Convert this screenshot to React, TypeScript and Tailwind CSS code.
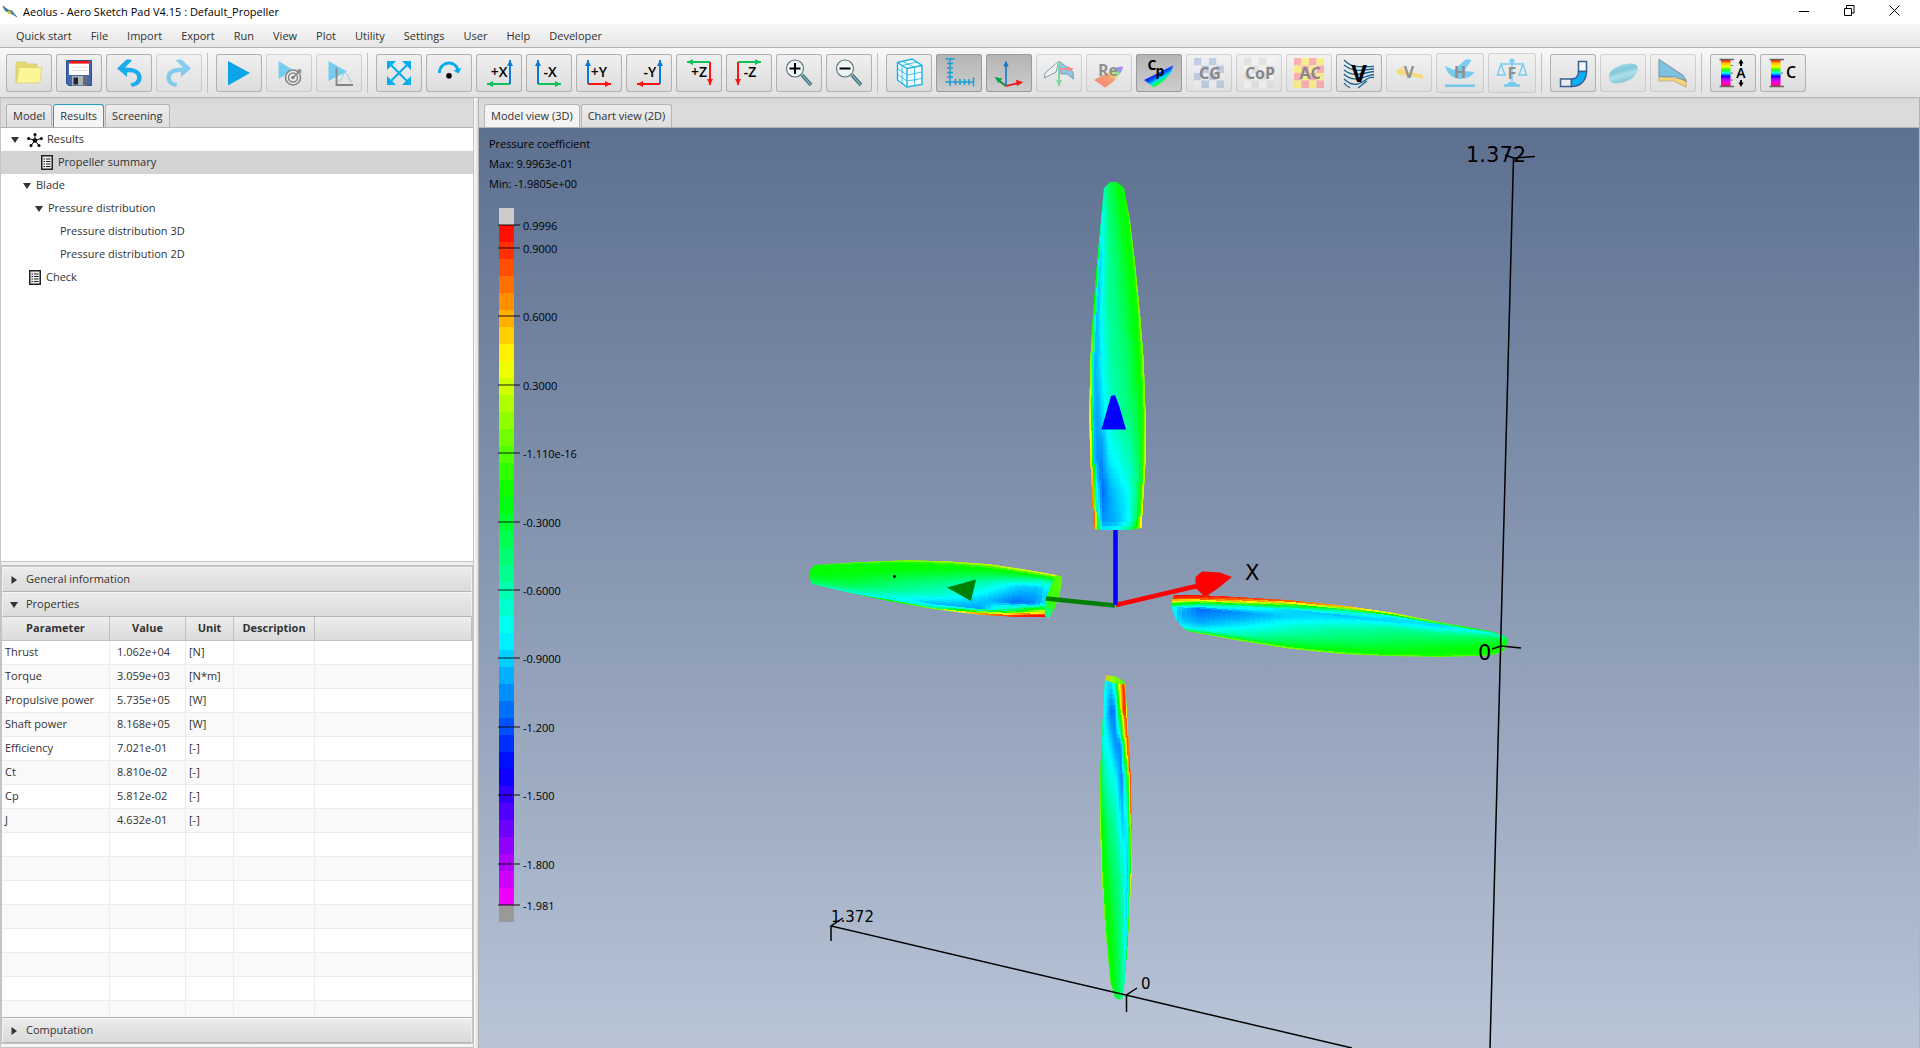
import type { ReactNode } from "react";
import clsx from "clsx";

const menus = [
  "Quick start",
  "File",
  "Import",
  "Export",
  "Run",
  "View",
  "Plot",
  "Utility",
  "Settings",
  "User",
  "Help",
  "Developer",
];

const BLUE = "#00adef";

/* ---------- toolbar icons (46 x 38 boxes) ---------- */

function Glyph({
  x,
  y,
  size = 14,
  weight = 600,
  fill = "#000",
  children,
}: {
  x: number;
  y: number;
  size?: number;
  weight?: number;
  fill?: string;
  children: string;
}) {
  return (
    <text
      x={x}
      y={y}
      fontSize={size}
      fontWeight={weight}
      fill={fill}
      textAnchor="middle"
    >
      {children}
    </text>
  );
}

type Dir = "up" | "down" | "left" | "right";

const heads: Record<Dir, string> = {
  up: "M-3 6 L0 0 L3 6Z",
  down: "M-3 -6 L0 0 L3 -6Z",
  left: "M6 -3 L0 0 L6 3Z",
  right: "M-6 -3 L0 0 L-6 3Z",
};

function Arrow({
  from,
  to,
  dir,
  color,
}: {
  from: [number, number];
  to: [number, number];
  dir: Dir;
  color: string;
}) {
  return (
    <g stroke={color} fill={color}>
      <line x1={from[0]} y1={from[1]} x2={to[0]} y2={to[1]} strokeWidth="2" />
      <path
        d={heads[dir]}
        stroke="none"
        transform={`translate(${to[0]} ${to[1]})`}
      />
    </g>
  );
}

function AxisView({ label, side }: { label: string; side: "left" | "right" }) {
  const corner = side === "left" ? 12 : 34;
  const far = side === "left" ? 35 : 11;
  const out: Dir = side === "left" ? "right" : "left";
  const axis = label[1];
  const top = axis === "Z";
  const y = top ? 8 : 30;
  return (
    <>
      <Arrow
        from={[corner, y]}
        to={[far, y]}
        dir={out}
        color={axis === "Y" ? "#ff1414" : "#0fc35a"}
      />
      <Arrow
        from={[corner, y]}
        to={[corner, top ? 31 : 6]}
        dir={top ? "down" : "up"}
        color={top ? "#ff1414" : "#0f78d2"}
      />
      <Glyph x={label[0] === "+" ? 23 : 24} y={23}>
        {label}
      </Glyph>
    </>
  );
}

function Magnifier({ plus }: { plus?: boolean }) {
  return (
    <>
      <line x1="26" y1="21" x2="35" y2="31" stroke="#3c6e78" strokeWidth="3.6" />
      <line x1="26" y1="21" x2="35" y2="31" stroke="#7fb0b8" strokeWidth="1.4" />
      <circle cx="19" cy="14.5" r="8.5" fill="#eef5f6" stroke="#5d7478" strokeWidth="1.1" />
      <path
        d={plus ? "M13.5 14.5H24.5M19 9V20" : "M13.5 14.5H24.5"}
        stroke="#000"
        strokeWidth="2"
      />
    </>
  );
}

function Checker({ a, b, label }: { a: string; b: string; label: string }) {
  const cells = [];
  for (let r = 0; r < 4; r++)
    for (let c = 0; c < 4; c++)
      cells.push(
        <rect
          key={`${r}-${c}`}
          x={8 + c * 7.5}
          y={4 + r * 7.5}
          width="7.5"
          height="7.5"
          fill={(r + c) % 2 ? b : a}
        />
      );
  return (
    <>
      {cells}
      <Glyph x={24} y={25} size={16} weight={700} fill="#222">
        {label}
      </Glyph>
    </>
  );
}

function ColorBar({ id }: { id: string }) {
  const stops = [0, 45, 60, 110, 180, 240, 285, 310, 340];
  return (
    <>
      <defs>
        <linearGradient id={id} x1="0" y1="0" x2="0" y2="1">
          {stops.map((h, i) => (
            <stop key={h} offset={i / (stops.length - 1)} stopColor={`hsl(${h} 100% 50%)`} />
          ))}
        </linearGradient>
      </defs>
      <rect x="11" y="6" width="9.5" height="26" fill={`url(#${id})`} />
      <path d="M9.5 5.5H24M9.5 32.5H24" stroke="#666" strokeWidth="1.6" />
    </>
  );
}

const undoArrow =
  "M24 5.5H20.5L11 14.5 21 23V18.5C29 17.5 32 21 31 25 30 28 27 29 24.5 29.5L26 33C33 31.5 36 28 35.5 22.5 35 16.5 29 13.5 19 13.5L26 6.5Z";

const icons: Record<string, ReactNode> = {
  open: (
    <>
      <path d="M10 29V9l1-1h9l2 2h9v6H13Z" fill="#e4d873" stroke="#d5c96a" strokeWidth=".7" />
      <path d="M13 13.5h23L34 28l-1 1H10.5Z" fill="#faf698" stroke="#dccf74" strokeWidth=".8" />
    </>
  ),
  save: (
    <>
      <path d="M10.5 6.5h25v25H12.5l-2-2Z" fill="#4267b0" stroke="#2f4f8e" />
      <rect x="13" y="7" width="20" height="14" fill="#fff" />
      <rect x="13" y="7" width="20" height="2.6" fill="#ee1111" />
      <path d="M15 13h16M15 16.5h16" stroke="#ddd" />
      <rect x="16" y="22" width="15" height="9.5" fill="#aeb2b8" />
      <rect x="17.5" y="23.5" width="4.5" height="7" fill="#1d2433" />
      <rect x="27" y="22" width="4" height="9.5" fill="#666c76" />
    </>
  ),
  undo: <path d={undoArrow} fill="#1cacee" />,
  redo: <path d={undoArrow} transform="matrix(-1 0 0 1 46 0)" fill="#1cacee" />,
  run: <path d="M12 7 34 19 12 31.5Z" fill="#0aa5e6" />,
  target: (
    <>
      <path d="M12.5 7 27 16 12.5 25Z" fill={BLUE} />
      <g fill="none" stroke="#222">
        <circle cx="27" cy="23.5" r="7.5" strokeWidth="1.6" fill="#eee" />
        <circle cx="27" cy="23.5" r="4.5" strokeWidth="1.5" />
        <path d="M27 23.5 35 15.5M32.5 15v3h3" strokeWidth="1.5" />
      </g>
      <circle cx="27" cy="23.5" r="1.8" fill="#222" />
    </>
  ),
  sweep: (
    <>
      <path d="M12.5 7 31 17.5 12.5 27Z" fill={BLUE} />
      <path d="M20.5 14V31H37" fill="none" stroke="#222" strokeWidth="1.8" />
      <path d="M23 27C27 26 27 16 30 19S33 28 36 28" fill="none" stroke="#2aa8e0" />
    </>
  ),
  fit: (
    <g fill={BLUE} stroke={BLUE}>
      <path d="M14 10 32 28M32 10 14 28" strokeWidth="2" />
      <path
        stroke="none"
        d="M11 7h9l-3.500 3.500 -2 2L11 16ZM35 7h-9l3.500 3.500 2 2L35 16ZM11 31h9l-3.500-3.500 -2-2L11 22ZM35 31h-9l3.500-3.500 2-2L35 22Z"
      />
    </g>
  ),
  rotate: (
    <>
      <path d="M13.5 19C13.5 6 31 6 32 17" fill="none" stroke={BLUE} strokeWidth="2.8" />
      <path d="M27.5 16.5 35.5 14 32.5 19.5Z" fill={BLUE} />
      <circle cx="23" cy="21.7" r="2.8" />
    </>
  ),
  px: <AxisView label="+X" side="right" />,
  mx: <AxisView label="-X" side="left" />,
  py: <AxisView label="+Y" side="left" />,
  my: <AxisView label="-Y" side="right" />,
  pz: <AxisView label="+Z" side="right" />,
  mz: <AxisView label="-Z" side="left" />,
  zoomIn: <Magnifier plus />,
  zoomOut: <Magnifier />,
  mesh: (
    <g fill="none" stroke="#1fb2e4">
      <path d="M11.5 8.5 26 5 36 11.5V30.5L21 33 11.5 26Z" fill="#f2fbff" strokeWidth="1.4" />
      <path d="M11.5 8.5 21 14.5 36 11.5M21 14.5V33" strokeWidth="1.4" />
      <path
        d="M16 11.5V29.5M28.5 13V32M11.5 14.5 21 21 36 18M11.5 20.5 21 27 36 24.5M16.500 7.5 28.5 13M16 11.5 31 8"
        strokeWidth=".8"
      />
    </g>
  ),
  ruler: (
    <g stroke="#1b9fd3" strokeWidth="1.5">
      <path d="M14 4.5V32M9.5 28H37.5" />
      <path d="M9.5 5H18.5M11 9.5H17M11 14H17M11 18.5H17M11 23H17M37.5 23.5V32.5M33 25V31M28.5 25V31M24 25V31M19.5 25V31" />
    </g>
  ),
  axes: (
    <>
      <path d="M20 32V10" stroke="#0f78d2" strokeWidth="1.6" />
      <path d="M20 6.5 22.7 12.5H17.3Z" fill="#0f78d2" />
      <path d="M20 32 12 26" stroke="#088a40" strokeWidth="1.8" />
      <path d="M8.5 23 16.5 24.5 12.5 29Z" fill="#08a048" />
      <path d="M20 32 32 29" stroke="#e11" strokeWidth="1.8" />
      <path d="M37 28.3 30 25.8 31 32Z" fill="#f11" />
    </>
  ),
  plane: (
    <>
      <path d="M23 7 37 18 37.5 25 31 20H25Z" fill="#2aa8e0" stroke="#234b7a" />
      <path d="M23 7 9 19 8.5 24 20 18Z" fill="#f4f6fa" stroke="#234b7a" />
      <Arrow from={[23, 7]} to={[23, 32]} dir="down" color="#0fc35a" />
      <Arrow from={[23, 15]} to={[37, 15]} dir="right" color="#f33" />
    </>
  ),
  re: (
    <>
      <defs>
        <linearGradient id="swoosh-re" x1="0" y1="1" x2="1" y2="0">
          <stop offset="0" stopColor="#ff1b00" />
          <stop offset=".5" stopColor="#ff5500" />
          <stop offset=".65" stopColor="#ffd000" />
          <stop offset=".75" stopColor="#22dd44" />
          <stop offset=".85" stopColor="#2244ff" />
          <stop offset="1" stopColor="#c0f" />
        </linearGradient>
      </defs>
      <path d="M8 26 32 13 37 12.5C36 20 28 28 19 33.5Z" fill="url(#swoosh-re)" />
      <Glyph x={22} y={22} size={16} weight={700} fill="#333">
        Re
      </Glyph>
    </>
  ),
  cp: (
    <>
      <defs>
        <linearGradient id="swoosh-cp" x1=".2" y1=".2" x2=".7" y2=".85">
          <stop offset=".2" stopColor="#1500ff" />
          <stop offset=".5" stopColor="#0060ff" />
          <stop offset=".65" stopColor="#00e0ff" />
          <stop offset=".8" stopColor="#00ff50" />
          <stop offset="1" stopColor="#c8ff00" />
        </linearGradient>
      </defs>
      <path d="M8 26 32 14 37 11.5C36 20 27 29 18 33.5Z" fill="url(#swoosh-cp)" />
      <Glyph x={16} y={16} weight={700}>
        C
      </Glyph>
      <Glyph x={24} y={22} weight={700}>
        p
      </Glyph>
    </>
  ),
  cg: <Checker a="#8fabd4" b="#e6e9f0" label="CG" />,
  cop: <Checker a="#d4d4d2" b="#f2f2ee" label="CoP" />,
  ac: <Checker a="#ff7078" b="#ffee28" label="AC" />,
  stream: (
    <>
      <g fill="none" stroke="#1a6396" strokeWidth="1.3">
        <path d="M8 6C16 14 22 13 38 12.5M8 11C18 19 24 16 38 15M8 16C18 24 26 19 38 17.5M8 20C18 30 28 22 38 20.5M8 25C18 34 24 30 31 25 34 23 36 23.5 38 23.5M8 29C10 32 12 33 14 33.500M22 34C27 30 28 29 31 27" />
      </g>
      <Glyph x={23} y={28} size={24} weight={700}>
        V
      </Glyph>
    </>
  ),
  velocity: (
    <>
      <path d="M9.5 17.5 17 13V16.5L37 21V24.5L16 20.5V23Z" fill="#ffc90e" />
      <Glyph x={23} y={24} size={16} weight={700} fill="#333">
        V
      </Glyph>
    </>
  ),
  hinge: (
    <>
      <g fill={BLUE}>
        <path d="M9 13C13 14 15 16 18 17L29 7C32 6 35 6 35 8L28 18 38.5 19C34 26 28 25 24 26 16 25 12 22 9 13Z" />
        <rect x="9" y="31.5" width="30" height="2.5" />
      </g>
      <Glyph x={24} y={25} size={16} weight={700} fill="#333">
        H
      </Glyph>
    </>
  ),
  balance: (
    <>
      <g stroke={BLUE} fill="none" strokeWidth="1.5">
        <path d="M24 6V32M13 11H35M13 11 9.5 22H17ZM35 11 31 22H38.5Z" />
        <path d="M16 32.5H32M20 30.5H28" strokeWidth="2.5" />
      </g>
      <circle cx="24" cy="8" r="2.5" fill={BLUE} />
      <Glyph x={24} y={26} size={16} weight={700} fill="#333">
        F
      </Glyph>
    </>
  ),
  duct: (
    <g stroke="#3b5f93" strokeWidth="1.5">
      <path d="M28.5 7.5H36.5V17.5H28.5Z" fill="#f4f6fa" />
      <path d="M10.5 25H21.5V32.5H10.5Z" fill="#e8ecf4" />
      <path d="M28.5 17.5H36.5C36.5 26 31 32.5 21.5 32.5V25C26 25 28.5 22 28.5 17.5Z" fill="#0ab0f5" />
    </g>
  ),
  body: (
    <>
      <defs>
        <linearGradient id="body-shade" x1=".3" y1="0" x2=".7" y2="1">
          <stop offset="0" stopColor="#5cc8e0" />
          <stop offset=".35" stopColor="#1aa3cc" />
          <stop offset=".55" stopColor="#6fd6ea" />
          <stop offset="1" stopColor="#1590b4" />
        </linearGradient>
      </defs>
      <path
        d="M9 23C8 16 20 10 30 9.5 36 9 39 12 37.5 17 35 24 26 29 16 29.5 11 29.5 9 27 9 23Z"
        fill="url(#body-shade)"
      />
    </>
  ),
  wing: (
    <g strokeWidth="1.2">
      <path d="M9 23V27H24L36 33V25Z" fill="#ffc400" stroke="#a8863a" />
      <path d="M9 5.5 33 21.5 36 27 25 22.5H9Z" fill="#1198d5" stroke="#234b7a" />
    </g>
  ),
  autoScale: (
    <>
      <ColorBar id="bar-auto" />
      <path d="M20.5 11.5H23M20.5 19H23M20.5 26H23" stroke="#666" />
      <Glyph x={31} y={24}>
        A
      </Glyph>
      <path d="M31 5 33.5 9.5H32V12H30V9.5H28.5ZM31 33 33.5 28.5H32V26H30V28.5H28.5Z" />
    </>
  ),
  customScale: (
    <>
      <ColorBar id="bar-custom" />
      <path d="M20.5 19H23" stroke="#666" />
      <Glyph x={31} y={24} size={16}>
        C
      </Glyph>
    </>
  ),
};

type Tool = { id: string; title: string; disabled?: boolean; pressed?: boolean; large?: boolean };

const toolGroups: Tool[][] = [
  [
    { id: "open", title: "Open" },
    { id: "save", title: "Save" },
    { id: "undo", title: "Undo" },
    { id: "redo", title: "Redo", disabled: true },
  ],
  [
    { id: "run", title: "Run" },
    { id: "target", title: "Run target", disabled: true },
    { id: "sweep", title: "Run sweep", disabled: true },
  ],
  [
    { id: "fit", title: "Fit view" },
    { id: "rotate", title: "Rotate" },
    { id: "px", title: "View +X" },
    { id: "mx", title: "View -X" },
    { id: "py", title: "View +Y" },
    { id: "my", title: "View -Y" },
    { id: "pz", title: "View +Z" },
    { id: "mz", title: "View -Z" },
    { id: "zoomIn", title: "Zoom in" },
    { id: "zoomOut", title: "Zoom out" },
  ],
  [
    { id: "mesh", title: "Mesh" },
    { id: "ruler", title: "Ruler", pressed: true },
    { id: "axes", title: "Axes", pressed: true },
    { id: "plane", title: "Forces", disabled: true },
    { id: "re", title: "Reynolds number", disabled: true },
    { id: "cp", title: "Pressure coefficient", pressed: true },
    { id: "cg", title: "Center of gravity", disabled: true },
    { id: "cop", title: "Center of pressure", disabled: true },
    { id: "ac", title: "Aerodynamic center", disabled: true },
    { id: "stream", title: "Streamlines" },
    { id: "velocity", title: "Velocity", disabled: true },
    { id: "hinge", title: "Hinge", disabled: true, large: true },
    { id: "balance", title: "Balance", disabled: true, large: true },
  ],
  [
    { id: "duct", title: "Duct" },
    { id: "body", title: "Body", disabled: true },
    { id: "wing", title: "Wing", disabled: true },
  ],
  [
    { id: "autoScale", title: "Automatic scale" },
    { id: "customScale", title: "Custom scale" },
  ],
];

function ToolButton({ tool }: { tool: Tool }) {
  return (
    <button
      type="button"
      aria-label={tool.title}
      aria-pressed={tool.pressed}
      disabled={tool.disabled}
      className={clsx(
        "shrink-0 rounded-[3px] ring-1 ring-inset",
        tool.large ? "h-10 w-12" : "h-[38px] w-[46px]",
        tool.pressed
          ? "bg-linear-to-b from-[#b4b4b4] to-[#cdcdcd] ring-[#9c9c9c]"
          : "bg-linear-to-b from-[#f0f0f0] to-[#dcdcdc] ring-[#b0b0b0]",
        tool.disabled && "opacity-50"
      )}
    >
      <svg
        viewBox={tool.large ? "0 0 48 40" : "0 0 46 38"}
        className="block h-full w-full"
        aria-hidden="true"
      >
        {icons[tool.id]}
      </svg>
    </button>
  );
}

function Toolbar() {
  return (
    <div className="flex h-[50px] shrink-0 items-center border-b border-[#b4b4b4] bg-linear-to-b from-[#f8f8f8] to-[#e2e2e2] px-1.5">
      {toolGroups.map((group, i) => (
        <div key={i} className="flex items-center">
          {i > 0 && <span className="ml-[5px] mr-2 h-10 w-px bg-[#c0c0c0]" />}
          <div className="flex items-center gap-1">
            {group.map((tool) => (
              <ToolButton key={tool.id} tool={tool} />
            ))}
          </div>
        </div>
      ))}
    </div>
  );
}

/* ---------- window chrome ---------- */

function TitleBar() {
  return (
    <div className="flex h-6 shrink-0 items-center bg-white pl-0.5">
      <svg viewBox="0 0 16 14" className="h-3.5 w-4" aria-hidden="true">
        <path d="M0 1 7 5 9 9 3 6Z" fill="#3f8790" />
        <path d="M6 5 10 5 15 12 9 9Z" fill="#5a93ad" />
        <circle cx="7.5" cy="7.5" r="2" fill="#d9c84a" />
        <path d="M1 1 15 12" stroke="#2f6b85" strokeWidth=".8" />
      </svg>
      <span className="ml-[5px] text-[11px] leading-4 text-black">
        Aeolus - Aero Sketch Pad V4.15 : Default_Propeller
      </span>
      <div className="ml-auto flex pb-1 pr-5">
        <button type="button" aria-label="Minimize" className="mr-[34px]">
          <svg viewBox="0 0 11 11" className="h-[11px] w-[11px]">
            <path d="M0 6.5H10" stroke="#000" />
          </svg>
        </button>
        <button type="button" aria-label="Restore" className="mr-[34px]">
          <svg viewBox="0 0 11 11" className="h-[11px] w-[11px]">
            <path d="M.5 3.5H7.5V10.5H.5ZM2.5 3V.5H10V8H8" fill="none" stroke="#000" />
          </svg>
        </button>
        <button type="button" aria-label="Close">
          <svg viewBox="0 0 11 11" className="h-[11px] w-[11px]">
            <path d="M.5 .5 10.5 10.5M10.5 .5 .5 10.5" stroke="#000" />
          </svg>
        </button>
      </div>
    </div>
  );
}

function MenuBar() {
  return (
    <nav className="flex h-6 shrink-0 items-center gap-[19px] border-b border-[#b4b4b4] bg-linear-to-b from-[#f8f8f8] to-[#e6e6e6] px-4">
      {menus.map((menu) => (
        <button key={menu} type="button" className="leading-4">
          {menu}
        </button>
      ))}
    </nav>
  );
}

function TabBar({
  tabs,
  active,
  focused,
}: {
  tabs: string[];
  active: string;
  focused?: boolean;
}) {
  return (
    <div
      role="tablist"
      className="flex h-[30px] shrink-0 items-end gap-px border-b border-[#b4b4b4] bg-linear-to-b from-[#d4d4d4] via-[#dcdcdc] via-20% to-[#dcdcdc] pl-[5px]"
    >
      {tabs.map((tab) => (
        <button
          key={tab}
          type="button"
          role="tab"
          aria-selected={tab === active}
          className={clsx(
            "h-[23px] rounded-t-[3px] border border-b-0 px-1.5 leading-[22px]",
            tab !== active &&
              "border-[#b4b4b4] bg-linear-to-b from-[#ededed] to-[#dedede]",
            tab === active && "bg-[#f4f4f4]",
            tab === active && (focused ? "border-[#2b9dc4]" : "border-[#b4b4b4]")
          )}
        >
          {tab}
        </button>
      ))}
    </div>
  );
}

/* ---------- left side ---------- */

function Triangle({ open }: { open?: boolean }) {
  return (
    <svg viewBox="0 0 8 8" className="h-2 w-2 shrink-0" aria-hidden="true">
      <path d={open ? "M0 1H8L4 7Z" : "M1.5 0V8L7 4Z"} fill="#333" />
    </svg>
  );
}

function ListIcon() {
  return (
    <svg viewBox="0 0 12 15" className="h-[15px] w-3 shrink-0" aria-hidden="true">
      <rect x=".75" y=".75" width="10.5" height="13.5" fill="#eee" stroke="#222" strokeWidth="1.5" />
      <path d="M2.5 4H4M2.5 6.5H4M2.5 9H4M2.5 11.5H4M5 4H9.5M5 6.5H9.5M5 9H9.5M5 11.5H9.5" stroke="#222" />
    </svg>
  );
}

function HubIcon() {
  return (
    <svg viewBox="0 0 16 14" className="h-3.5 w-4 shrink-0" aria-hidden="true">
      <path d="M8 7.5V2M8 7.5 2 5.5M8 7.5 14 5.5M8 7.5 4 12.5M8 7.5 12 12.5" stroke="#000" />
      <circle cx="8" cy="7.5" r="2.2" />
      <circle cx="8" cy="1.6" r="1.5" />
      <circle cx="1.6" cy="5.5" r="1.5" />
      <circle cx="14.4" cy="5.5" r="1.5" />
      <circle cx="4" cy="12.4" r="1.5" />
      <circle cx="12" cy="12.4" r="1.5" />
    </svg>
  );
}

function ResultTree() {
  const row = "flex h-[23px] items-center";
  return (
    <ul role="tree" className="min-h-0 flex-1 overflow-hidden bg-white">
      <li role="treeitem" className={clsx(row, "gap-1 pl-2.5")}>
        <Triangle open />
        <span className="ml-1">
          <HubIcon />
        </span>
        <span>Results</span>
      </li>
      <li role="treeitem" aria-selected="true" className={clsx(row, "gap-[5px] bg-[#d3d3d3] pl-10")}>
        <ListIcon />
        <span>Propeller summary</span>
      </li>
      <li role="treeitem" className={clsx(row, "gap-[5px] pl-[22px]")}>
        <Triangle open />
        <span>Blade</span>
      </li>
      <li role="treeitem" className={clsx(row, "gap-[5px] pl-[34px]")}>
        <Triangle open />
        <span>Pressure distribution</span>
      </li>
      <li role="treeitem" className={clsx(row, "pl-[59px]")}>
        Pressure distribution 3D
      </li>
      <li role="treeitem" className={clsx(row, "pl-[59px]")}>
        Pressure distribution 2D
      </li>
      <li role="treeitem" className={clsx(row, "gap-[5px] pl-7")}>
        <ListIcon />
        <span>Check</span>
      </li>
    </ul>
  );
}

function SectionHeader({ title, open }: { title: string; open?: boolean }) {
  return (
    <button
      type="button"
      aria-expanded={!!open}
      className="flex h-[25px] w-full shrink-0 items-center gap-2 border border-t-[#f6f6f6] border-x-[#f0f0f0] border-b-[#b4b4b4] bg-linear-to-b from-[#ececec] to-[#dadada] pl-[7px] text-left"
    >
      <Triangle open={open} />
      {title}
    </button>
  );
}

const properties = [
  ["Thrust", "1.062e+04", "[N]"],
  ["Torque", "3.059e+03", "[N*m]"],
  ["Propulsive power", "5.735e+05", "[W]"],
  ["Shaft power", "8.168e+05", "[W]"],
  ["Efficiency", "7.021e-01", "[-]"],
  ["Ct", "8.810e-02", "[-]"],
  ["Cp", "5.812e-02", "[-]"],
  ["J", "4.632e-01", "[-]"],
  ...Array.from({ length: 8 }, () => ["", "", ""]),
];

function PropertyTable() {
  const cell = "border-r border-b border-[#ececec] p-0";
  return (
    <div className="h-[400px] shrink-0 overflow-hidden bg-white">
      <table className="w-full table-fixed border-separate border-spacing-0">
        <colgroup>
          <col className="w-[108px]" />
          <col className="w-[76px]" />
          <col className="w-12" />
          <col className="w-[81px]" />
          <col />
        </colgroup>
        <thead>
          <tr className="h-6">
            {["Parameter", "Value", "Unit", "Description", ""].map((head, i) => (
              <th
                key={i}
                className="border-r border-b border-[#c0c0c0] bg-linear-to-b from-[#eeeeee] to-[#dadada] p-0 font-bold"
              >
                {head}
              </th>
            ))}
          </tr>
        </thead>
        <tbody>
          {properties.map(([name, value, unit], i) => (
            <tr key={i} className="h-6 even:bg-[#f9f9f9]">
              <td className={clsx(cell, "pl-[3px]")}>{name}</td>
              <td className={clsx(cell, "pl-[7px]")}>{value}</td>
              <td className={clsx(cell, "pl-[3px]")}>{unit}</td>
              <td className={cell} />
              <td className="border-b border-[#ececec] p-0" />
            </tr>
          ))}
        </tbody>
      </table>
    </div>
  );
}

function SidePanel() {
  return (
    <aside className="flex w-[474px] shrink-0 flex-col border-x border-[#c4c4c4] bg-[#f4f4f4]">
      <TabBar tabs={["Model", "Results", "Screening"]} active="Results" focused />
      <ResultTree />
      <div className="h-[5px] shrink-0 border-y border-[#c4c4c4] bg-[#efefef]" />
      <div className="shrink-0 border border-[#c4c4c4]">
        <SectionHeader title="General information" />
        <SectionHeader title="Properties" open />
        <PropertyTable />
        <div className="border-t border-[#b4b4b4]">
          <SectionHeader title="Computation" />
        </div>
      </div>
      <div className="h-1 shrink-0 border-b border-[#c4c4c4]" />
    </aside>
  );
}

/* ---------- 3D view ---------- */

// Chordwise positions at which the hues of a station are given.
const CHORD = [0, 0.04, 0.1, 0.2, 0.35, 0.5, 0.7, 0.88, 0.96, 1];

// Each station is a section of the blade: both edge points and the hues between them.
type Station = [number, number, number, number, number[]];

type Blade = { id: string; outline: string; stations: Station[] };

const blades: Blade[] = [
  {
    id: "top",
    outline:
      "M1110 182H1117L1124 188 1130 220 1135 260 1140 310 1144 360 1146 416 1146 460 1144 493 1142 528 1130 530H1100L1093 529 1091 493 1090 460 1089 416 1090 360 1093 310 1097 260 1101 218 1104 188Z",
    stations: [
      [1104, 182, 1124, 182, [160, 155, 150, 145, 135, 130, 122, 118, 115, 100]],
      [1101, 218, 1130, 218, [150, 175, 175, 155, 145, 138, 125, 120, 115, 80]],
      [1097, 260, 1135, 260, [90, 165, 190, 168, 152, 146, 130, 120, 115, 80]],
      [1093, 310, 1140, 310, [80, 160, 195, 175, 155, 150, 136, 120, 112, 70]],
      [1090, 360, 1144, 360, [40, 140, 200, 184, 160, 153, 143, 122, 110, 70]],
      [1089, 416, 1146, 416, [20, 120, 203, 196, 170, 160, 150, 130, 110, 60]],
      [1090, 460, 1146, 460, [10, 100, 203, 208, 184, 178, 162, 140, 100, 55]],
      [1092, 493, 1144, 493, [5, 70, 180, 216, 200, 190, 180, 148, 105, 50]],
      [1093, 522, 1142, 522, [5, 40, 150, 205, 202, 196, 182, 138, 90, 35]],
      [1093, 530, 1142, 530, [5, 60, 150, 182, 180, 175, 150, 120, 75, 30]],
    ],
  },
  {
    id: "left",
    outline:
      "M815 565 857 562 907 560 947 561 990 564 1023 569 1057 575 1055 590 1046 617 1013 617 980 615 933 609 893 602 850 593 812 584 809 577 810 570Z",
    stations: [
      [809, 565, 809, 584, [115, 118, 118, 118, 120, 122, 128, 140, 160, 110]],
      [857, 562, 850, 594, [90, 115, 118, 118, 122, 128, 138, 155, 180, 90]],
      [907, 560, 893, 602, [75, 112, 118, 120, 130, 142, 154, 172, 185, 60]],
      [947, 561, 933, 610, [65, 110, 118, 124, 142, 155, 170, 198, 150, 40]],
      [990, 564, 980, 615, [60, 100, 120, 134, 160, 176, 192, 202, 60, 15]],
      [1023, 569, 1013, 617, [55, 95, 122, 150, 190, 200, 215, 130, 20, 5]],
      [1042, 572, 1032, 617, [50, 90, 125, 165, 192, 200, 208, 80, 8, 3]],
      [1057, 575, 1048, 617, [45, 90, 125, 160, 175, 178, 170, 60, 5, 2]],
    ],
  },
  {
    id: "right",
    outline:
      "M1174 595H1207L1240 597 1290 600 1340 605 1390 612 1440 622 1490 631 1502 633 1508 639V642L1502 654 1480 656 1440 657 1390 656 1340 654 1290 649 1240 641 1187 631Q1173 620 1172 608L1172 600Z",
    stations: [
      [1172, 595, 1172, 631, [5, 5, 15, 80, 175, 180, 178, 170, 140, 80]],
      [1182, 595, 1182, 631, [3, 3, 20, 95, 195, 200, 195, 180, 150, 90]],
      [1200, 595, 1200, 634, [5, 5, 20, 120, 215, 210, 200, 182, 130, 75]],
      [1240, 597, 1240, 641, [10, 15, 50, 165, 206, 198, 180, 158, 122, 70]],
      [1290, 600, 1290, 649, [12, 35, 110, 190, 190, 174, 156, 135, 118, 70]],
      [1340, 605, 1340, 654, [25, 60, 150, 195, 178, 158, 145, 126, 118, 75]],
      [1390, 612, 1390, 657, [40, 100, 185, 190, 158, 148, 136, 122, 116, 75]],
      [1440, 622, 1440, 657, [70, 130, 192, 176, 150, 140, 126, 118, 116, 85]],
      [1490, 631, 1490, 656, [110, 160, 176, 150, 136, 128, 120, 116, 114, 95]],
      [1508, 637, 1508, 650, [160, 150, 140, 130, 125, 120, 115, 112, 110, 100]],
    ],
  },
  {
    id: "bottom",
    outline:
      "M1105 677 1115 682 1125 684 1127 710 1129 743 1131 777 1132 827 1132 867 1129 927 1127 960 1125 980 1123 997 1120 1000 1115 998 1110 980 1105 927 1101 867 1100 827 1100 777 1101 743 1103 710Z",
    stations: [
      [1104, 678, 1126, 678, [150, 178, 180, 185, 185, 150, 50, 8, 60, 130]],
      [1103, 710, 1127, 710, [150, 180, 183, 196, 214, 208, 95, 5, 20, 110]],
      [1101, 743, 1129, 743, [110, 165, 173, 180, 190, 206, 206, 60, 8, 50]],
      [1100, 777, 1131, 777, [80, 130, 152, 164, 172, 180, 210, 130, 25, 5]],
      [1100, 827, 1132, 827, [60, 115, 122, 140, 150, 160, 190, 180, 60, 8]],
      [1101, 867, 1132, 867, [60, 115, 118, 128, 142, 149, 168, 192, 100, 20]],
      [1105, 927, 1129, 927, [80, 115, 118, 120, 130, 140, 155, 190, 150, 70]],
      [1110, 980, 1125, 980, [100, 116, 118, 120, 126, 135, 145, 170, 165, 140]],
      [1112, 1000, 1124, 1000, [110, 118, 120, 124, 130, 138, 145, 150, 155, 150]],
    ],
  },
];

const mix = (a: number, b: number, t: number) => a + (b - a) * t;

function hueAt(hues: number[], v: number) {
  let i = 0;
  while (i < CHORD.length - 2 && v > CHORD[i + 1]) i++;
  return mix(hues[i], hues[i + 1], (v - CHORD[i]) / (CHORD[i + 1] - CHORD[i]));
}

const ACROSS = 26;

function BladeMesh({ blade }: { blade: Blade }) {
  const cells: ReactNode[] = [];
  for (let s = 0; s < blade.stations.length - 1; s++) {
    const a = blade.stations[s];
    const b = blade.stations[s + 1];
    const length = Math.hypot(b[0] - a[0], b[1] - a[1]);
    const steps = Math.max(2, Math.round(length / 5));
    const corner = (t: number, v: number) =>
      `${mix(mix(a[0], b[0], t), mix(a[2], b[2], t), v).toFixed(2)},${mix(
        mix(a[1], b[1], t),
        mix(a[3], b[3], t),
        v
      ).toFixed(2)}`;
    for (let i = 0; i < steps; i++) {
      const t0 = i / steps;
      const t1 = (i + 1) / steps;
      for (let j = 0; j < ACROSS; j++) {
        const v0 = j / ACROSS;
        const v1 = (j + 1) / ACROSS;
        const mid = (v0 + v1) / 2;
        const hue = mix(hueAt(a[4], mid), hueAt(b[4], mid), (t0 + t1) / 2);
        cells.push(
          <polygon
            key={`${s}-${i}-${j}`}
            points={[corner(t0, v0), corner(t1, v0), corner(t1, v1), corner(t0, v1)].join(" ")}
            fill={`hsl(${hue.toFixed(0)} 100% 50%)`}
          />
        );
      }
    }
  }
  return (
    <>
      <clipPath id={`blade-${blade.id}`}>
        <path d={blade.outline} />
      </clipPath>
      <g clipPath={`url(#blade-${blade.id})`} shapeRendering="crispEdges">
        {cells}
      </g>
    </>
  );
}

const ticks: [number, string][] = [
  [225, "0.9996"],
  [248, "0.9000"],
  [316, "0.6000"],
  [385, "0.3000"],
  [453, "-1.110e-16"],
  [522, "-0.3000"],
  [590, "-0.6000"],
  [658, "-0.9000"],
  [727, "-1.200"],
  [795, "-1.500"],
  [864, "-1.800"],
  [905, "-1.981"],
];

function Legend() {
  return (
    <g>
      <g shapeRendering="crispEdges">
        <rect x="499" y="208" width="15" height="17" fill="#cccccc" />
        {Array.from({ length: 40 }, (_, i) => (
          <rect
            key={i}
            x="499"
            y={225 + i * 17}
            width="15"
            height="17"
            fill={`hsl(${(i + 0.5) * 7.5} 100% 50%)`}
          />
        ))}
        <rect x="499" y="905" width="15" height="17" fill="#999999" />
      </g>
      {ticks.map(([y, label]) => (
        <g key={label}>
          <line x1="498" x2="520" y1={y} y2={y} stroke="#000" strokeOpacity=".6" strokeWidth="1.5" />
          <text x="523" y={y + 5} fontSize="11">
            {label}
          </text>
        </g>
      ))}
    </g>
  );
}

function Scene() {
  return (
    <svg
      viewBox="479 128 1440 920"
      preserveAspectRatio="xMinYMin slice"
      className="absolute inset-0 h-full w-full"
      role="img"
      aria-label="Pressure coefficient on the propeller blades"
    >
      <defs>
        <linearGradient id="root-left" x1=".8" y1="0" x2=".2" y2="1">
          <stop offset="0" stopColor="#5dff00" />
          <stop offset=".7" stopColor="#30ff10" />
          <stop offset="1" stopColor="#00ffb0" />
        </linearGradient>
        <linearGradient id="root-bottom">
          <stop offset="0" stopColor="#ffb000" />
          <stop offset=".3" stopColor="#90ff00" />
          <stop offset="1" stopColor="#40ff00" />
        </linearGradient>
      </defs>

      {blades.map((blade) => (
        <BladeMesh key={blade.id} blade={blade} />
      ))}
      <path
        d="M1057 575 1062 577C1062 592 1055 610 1049 618L1045 616C1043 602 1050 586 1057 575Z"
        fill="url(#root-left)"
      />
      <path d="M1105 677 1107 675 1117 677 1126 683 1124 684 1113 683 1105 680Z" fill="url(#root-bottom)" />

      <path d="M1046 598.5 1115 605.5" stroke="#008000" strokeWidth="4.5" />
      <path d="M1116 605 1197 586" stroke="#ff0000" strokeWidth="4.5" />
      <path d="M1115.5 530V605" stroke="#0000fe" strokeWidth="4.5" />
      <path d="M1111 396 1115 395 1119.5 407 1126 429.5H1101.5Z" fill="#0000fe" />
      <path d="M947 587.5 976 579.5 971 601Z" fill="#008000" />
      <path
        d="M1195.5 577 1202 571.5 1220 572.5 1232 577 1217 589 1208 595H1203L1195.5 588Z"
        fill="#ff0000"
      />
      <circle cx="894.5" cy="576.5" r="1.4" />

      <g stroke="#000" strokeWidth="1.5" fill="none">
        <path d="M1513.5 158 1490 1048" />
        <path d="M1505 155 1513.5 158 1535 156.5" />
        <path d="M1492 649 1501 646 1521 648" />
        <path d="M843 918 831 926 1352 1048M831 926V941" />
        <path d="M1137 988 1126.5 995V1012" />
      </g>
      <g fontSize="21" fontFamily="'DejaVu Sans', sans-serif">
        <text x="1245" y="580">X</text>
        <text x="1466" y="162">1.372</text>
        <text x="1478" y="660">0</text>
      </g>
      <g fontSize="15" fontFamily="'DejaVu Sans', sans-serif">
        <text x="831" y="922">1.372</text>
        <text x="1141" y="989">0</text>
      </g>

      <Legend />
    </svg>
  );
}

function Viewport() {
  return (
    <main className="flex min-w-0 flex-1 flex-col border-x border-[#b4b4b4]">
      <TabBar tabs={["Model view (3D)", "Chart view (2D)"]} active="Model view (3D)" />
      <div className="relative min-h-0 flex-1 overflow-hidden bg-linear-to-b from-[#5d7090] to-[#b9c5d7]">
        <Scene />
        <div className="relative pl-2.5 pt-1.5 leading-5 text-black">
          <p>Pressure coefficient</p>
          <p>Max: 9.9963e-01</p>
          <p>Min: -1.9805e+00</p>
        </div>
      </div>
    </main>
  );
}

export default function App() {
  return (
    <div className="flex h-screen flex-col overflow-hidden bg-[#f4f4f4] font-['Open_Sans','Noto_Sans',sans-serif] text-[11px] text-[#323232]">
      <TitleBar />
      <MenuBar />
      <Toolbar />
      <div className="flex min-h-0 flex-1">
        <SidePanel />
        <div className="w-1 shrink-0 bg-linear-to-r from-[#fafafa] to-[#dedede]" />
        <Viewport />
      </div>
    </div>
  );
}
